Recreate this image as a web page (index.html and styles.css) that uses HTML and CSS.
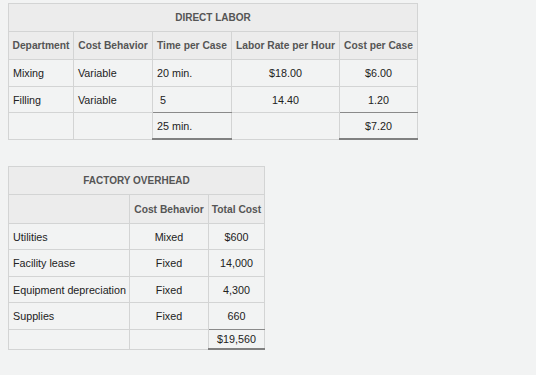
FILE: index.html
```html
<!DOCTYPE html>
<html>
<head>
<meta charset="utf-8">
<link rel="stylesheet" href="styles.css">
</head>
<body>
<table class="grid labor">
  <tr class="title"><th colspan="5">DIRECT LABOR</th></tr>
  <tr class="head">
    <th class="w65">Department</th><th class="w79">Cost Behavior</th><th class="w79">Time per Case</th><th class="w108">Labor Rate per Hour</th><th class="w78">Cost per Case</th>
  </tr>
  <tr class="r1"><td>Mixing</td><td>Variable</td><td>20 min.</td><td class="c">$18.00</td><td class="c">$6.00</td></tr>
  <tr class="r2"><td>Filling</td><td>Variable</td><td class="last">&nbsp;5</td><td class="c">14.40</td><td class="c last">1.20</td></tr>
  <tr class="r3"><td></td><td></td><td class="tot">25 min.</td><td></td><td class="c tot">$7.20</td></tr>
</table>

<table class="grid overhead">
  <tr class="title"><th colspan="3">FACTORY OVERHEAD</th></tr>
  <tr class="head2"><th class="w121"></th><th class="w79">Cost Behavior</th><th class="w56">Total Cost</th></tr>
  <tr class="o1"><td>Utilities</td><td class="c">Mixed</td><td class="c">$600</td></tr>
  <tr class="o2"><td>Facility lease</td><td class="c">Fixed</td><td class="c">14,000</td></tr>
  <tr class="o3"><td>Equipment depreciation</td><td class="c">Fixed</td><td class="c">4,300</td></tr>
  <tr class="o4"><td>Supplies</td><td class="c">Fixed</td><td class="c last">660</td></tr>
  <tr class="o5"><td></td><td></td><td class="c tot">$19,560</td></tr>
</table>
</body>
</html>
```

FILE: styles.css
```css
html { background: #f2f3f3; }
body {
  margin: 3px 8px;
  font-family: "Liberation Sans", Arial, sans-serif;
  font-size: 10.75px;
  color: #222;
}
.grid {
  border-collapse: collapse;
  background: #f2f3f3;
}
.grid th, .grid td {
  border: 1px solid #d3d4d4;
  padding: 0 3px 0 4px;
  vertical-align: middle;
  white-space: nowrap;
}
.grid th {
  font-size: 10.25px;
  font-weight: bold;
  color: #555;
  background: #ececec;
  text-align: center;
  padding: 0;
}
.grid .w65 { width: 64px; }
.grid .w79 { width: 78px; }
.grid .w108 { width: 107px; }
.grid .w78 { width: 77px; }
.grid .w121 { width: 120px; }
.grid .w56 { width: 55px; }
.grid td { text-align: left; }
.grid td.c { text-align: center; padding: 0; }
.title th { height: 27px; font-size: 10px; }
.head th { height: 27px; }
.r1 td { height: 26px; }
.r2 td { height: 25px; }
.r3 td { height: 25px; }
.grid td.last { border-bottom: 1px solid #8a8a8a; }
.grid td.tot {
  border-top: 1px solid #8a8a8a;
  border-bottom: 2px solid #808080;
}
.overhead { margin-top: 26px; }
.head2 th { height: 28px; }
.o1 td { height: 25px; }
.o2 td { height: 26px; }
.o3 td { height: 25px; }
.o4 td { height: 26px; }
.o5 td { height: 18px; }
```
